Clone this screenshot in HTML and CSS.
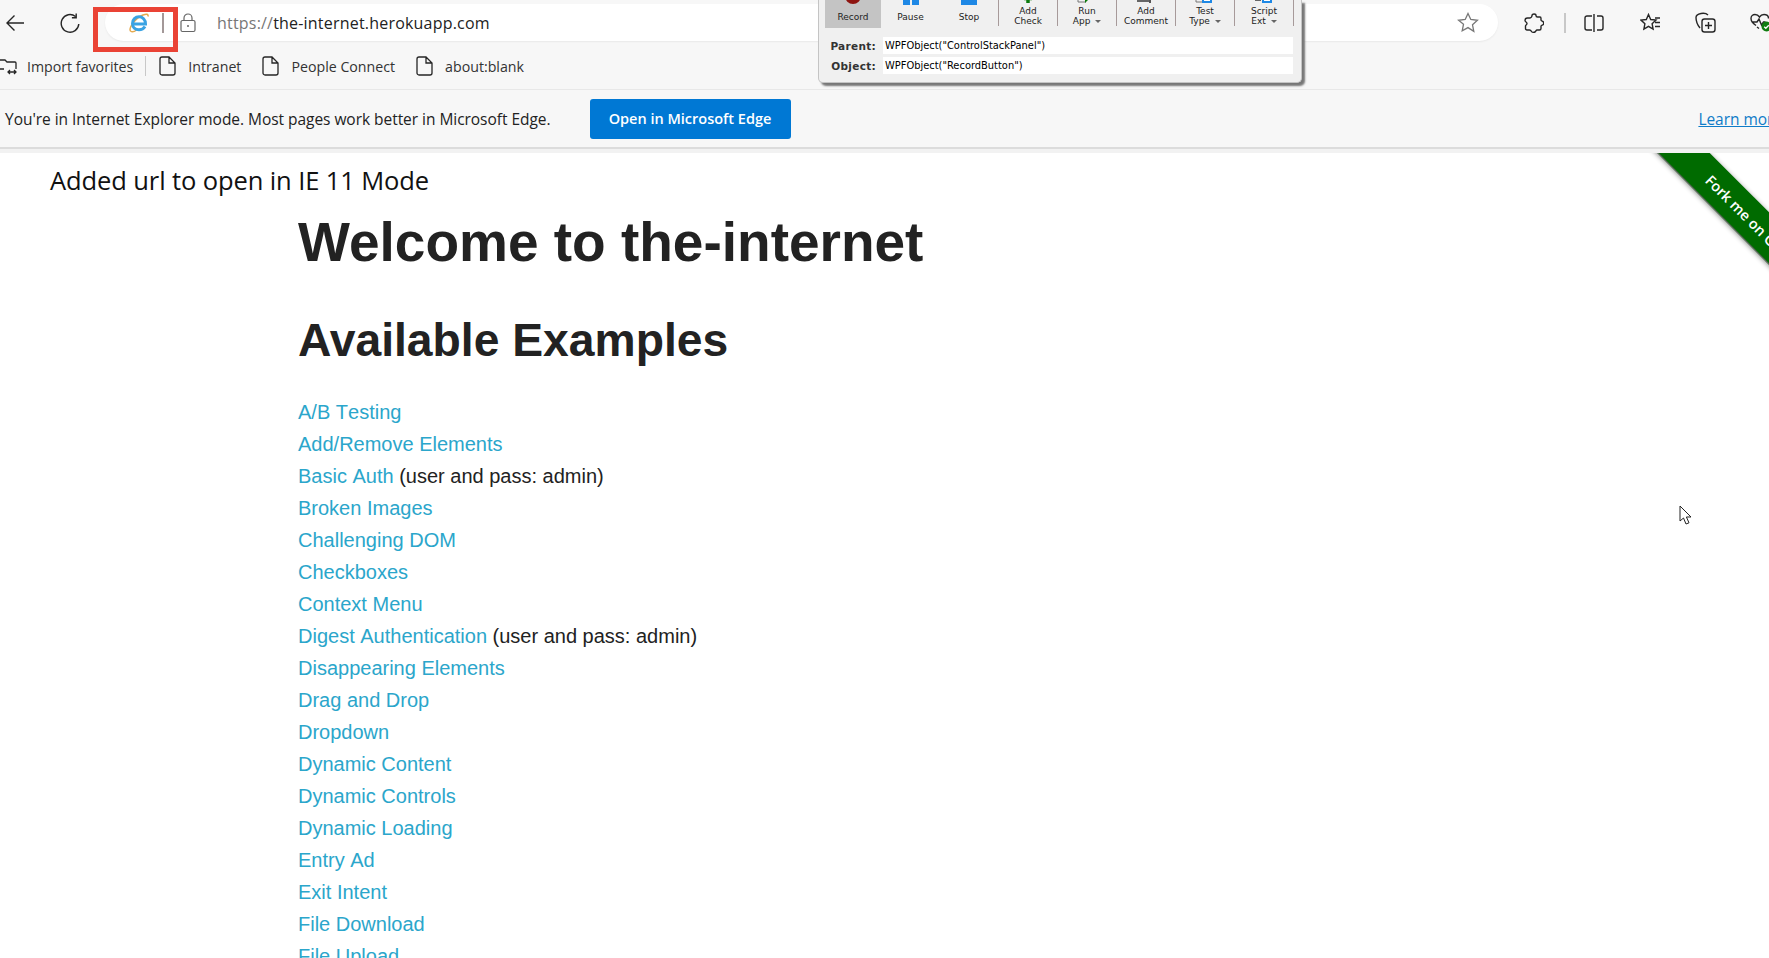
FILE: index.html
```html
<!DOCTYPE html>
<html lang="en">
<head>
<meta charset="utf-8">
<title>the-internet in IE mode</title>
<link rel="stylesheet" href="styles.css">
</head>
<body>
<div class="browser">
  <header class="toolbar">
    <svg class="nav back" width="20" height="18" viewBox="0 0 20 18"><path d="M19 9H2M9.500 1.500 2 9l7.500 7.500"/></svg>
    <svg class="nav reload" width="20" height="20" viewBox="0 0 20 20"><path d="M18.800 11A8.800 8.800 0 1 1 15.500 3.500M16.200 .5v4.300h-4.300"/></svg>
    <div class="address">
      <svg class="ie" width="20" height="20" viewBox="0 0 20 20">
        <path class="ie-ring" d="M1.500 18C-.5 15.500 6 5 14 2c3-1 5.500-1.200 5 1.500M1.500 18c1.500 1.200 4 .5 6-1"/>
        <path class="ie-e" d="M3.500 11h13C16.500 6.500 13.500 3.800 10 3.800S3.500 6.500 3.500 10.500 6.300 16.800 10 16.800c2.800 0 4.800-1.300 6-3.300"/>
      </svg>
      <span class="addr-sep"></span>
      <svg class="lock" width="16" height="20" viewBox="0 0 16 20"><path d="M4 8V5a4 4 0 0 1 8 0v3M2.500 7.500h11a1.500 1.500 0 0 1 1.500 1.500v8a1.500 1.500 0 0 1-1.500 1.500h-11A1.500 1.500 0 0 1 1 17V9a1.500 1.500 0 0 1 1.500-1.500z"/><circle cx="8" cy="13" r="1"/></svg>
      <span class="url"><span class="scheme">https://</span>the-internet.herokuapp.com</span>
      <svg class="star" width="22" height="21" viewBox="0 0 22 21"><path d="M11 1.500l2.800 6 6.600.8-4.900 4.500 1.300 6.500L11 15.600l-5.800 3.200 1.300-6.500L1.600 8.300l6.600-.8z"/></svg>
    </div>
    <svg class="tool puzzle" width="20" height="20" viewBox="0 0 20 20"><path d="M8 2.500c0-2 4-2 4 0 0 1 .5 1.500 1.500 1.500H16c1 0 1 .5 1 1.500V7c0 1 1.500 1 2 1.500 .800 1 .800 2.500 0 3.200-.5.500-2 .500-2 1.500v2.300c0 1-.5 1.500-1.500 1.500h-2.500c-1 0-1 1.500-2 2-1 .5-3 .5-3.500-.5-.5-1-1-1.500-2-1.500H3c-1 0-1.500-.5-1.500-1.500V13c0-1 1.500-1 1.500-2.500S1 9 1 7.500 2 5 3.500 5H6c1 0 2-1.500 2-2.500z"/></svg>
    <span class="tool-sep"></span>
    <svg class="tool split" width="20" height="20" viewBox="0 0 20 20"><path d="M8 3H3a2 2 0 0 0-2 2v10a2 2 0 0 0 2 2h5M13 3h4a2 2 0 0 1 2 2v10a2 2 0 0 1-2 2h-4M10 1v18"/></svg>
    <svg class="tool favs" width="21" height="20" viewBox="0 0 21 20"><path d="M8.500 1.500l2.200 5 5.300.6-3.900 3.600 1 5.300-4.600-2.700-4.600 2.700 1-5.300L1 7.100l5.300-.6zM15 5h5M15 9.500h5M15 13.500h5"/></svg>
    <svg class="tool colls" width="21" height="21" viewBox="0 0 21 21"><path d="M5 16C2.500 13 1 9 1 5.500 1 3 3 2 6 1.500c3-.5 5-.5 7 1.500"/><rect x="7" y="7" width="13" height="13" rx="2.500"/><path d="M13.500 10v7M10 13.500h7"/></svg>
    <span class="tool health">
      <svg width="24" height="20" viewBox="0 0 24 20"><path d="M6 12.500C3 10.500 1 8 1 5.500 1 3 3 1.500 5 1.500c2 0 3.500 1 4.500 2.500 1-1.500 2.500-2.500 4.500-2.500 2.500 0 4.500 1.500 4.500 4M2 9h5l2 -3 2.500 6 2-3h2M9 15.500l-2-1.500"/><circle class="ok" cx="16.500" cy="13.500" r="5"/><path class="tick" d="M14.200 13.700l1.600 1.600 3-3"/></svg>
    </span>
  </header>

  <nav class="favbar">
    <svg class="import" width="17" height="18" viewBox="0 0 17 18"><path d="M0 3h5l2 2h8a1 1 0 0 1 1 1v6M4 12H0M8 15h8M10 13l-2 2 2 2M14 13l2 2-2 2"/></svg>
    <span class="fav-label">Import favorites</span>
    <span class="fav-sep"></span>
    <a class="fav"><svg width="17" height="20" viewBox="0 0 17 20"><path d="M3 1h7l6 6v10a2 2 0 0 1-2 2H3a2 2 0 0 1-2-2V3a2 2 0 0 1 2-2zM10 1v6h6"/></svg>Intranet</a>
    <a class="fav"><svg width="17" height="20" viewBox="0 0 17 20"><path d="M3 1h7l6 6v10a2 2 0 0 1-2 2H3a2 2 0 0 1-2-2V3a2 2 0 0 1 2-2zM10 1v6h6"/></svg>People Connect</a>
    <a class="fav"><svg width="17" height="20" viewBox="0 0 17 20"><path d="M3 1h7l6 6v10a2 2 0 0 1-2 2H3a2 2 0 0 1-2-2V3a2 2 0 0 1 2-2zM10 1v6h6"/></svg>about:blank</a>
  </nav>

  <section class="infobar">
    <span class="info-text">You're in Internet Explorer mode. Most pages work better in Microsoft Edge.</span>
    <button class="open-edge">Open in Microsoft Edge</button>
    <a class="learn">Learn more</a>
  </section>

  <main class="page">
    <p class="note">Added url to open in IE 11 Mode</p>
    <div class="content">
      <h1>Welcome to the-internet</h1>
      <h2>Available Examples</h2>
      <ul class="examples">
        <li><a>A/B Testing</a></li>
        <li><a>Add/Remove Elements</a></li>
        <li><a>Basic Auth</a> (user and pass: admin)</li>
        <li><a>Broken Images</a></li>
        <li><a>Challenging DOM</a></li>
        <li><a>Checkboxes</a></li>
        <li><a>Context Menu</a></li>
        <li><a>Digest Authentication</a> (user and pass: admin)</li>
        <li><a>Disappearing Elements</a></li>
        <li><a>Drag and Drop</a></li>
        <li><a>Dropdown</a></li>
        <li><a>Dynamic Content</a></li>
        <li><a>Dynamic Controls</a></li>
        <li><a>Dynamic Loading</a></li>
        <li><a>Entry Ad</a></li>
        <li><a>Exit Intent</a></li>
        <li><a>File Download</a></li>
        <li><a>File Upload</a></li>
      </ul>
    </div>
    <div class="ribbon">Fork me on GitHub</div>
    <svg class="cursor" width="13" height="21" viewBox="0 0 13 21"><path d="M1 1v15l3.500-3 2.500 6 3-1.200-2.600-5.800H12z"/></svg>
  </main>
</div>

<div class="highlight"></div>

<aside class="recorder">
  <div class="rec-buttons">
    <div class="rec-btn active"><svg width="18" height="16" viewBox="0 0 18 16"><circle cx="9" cy="7" r="8" fill="#8e1410"/></svg><span>Record</span></div>
    <div class="rec-btn"><svg width="18" height="16" viewBox="0 0 18 16"><rect x="1" width="7" height="16" fill="#1e88e5"/><rect x="10" width="7" height="16" fill="#1e88e5"/></svg><span>Pause</span></div>
    <div class="rec-btn"><svg width="18" height="16" viewBox="0 0 18 16"><rect x="1" width="16" height="16" fill="#1e88e5"/></svg><span>Stop</span></div>
    <div class="rec-btn two sep"><svg width="18" height="10" viewBox="0 0 18 10"><path d="M9 0v7M5 2.500h8" stroke="#0c7a0c" stroke-width="3.500" fill="none"/></svg><span>Add<br>Check</span></div>
    <div class="rec-btn two sep"><svg width="22" height="10" viewBox="0 0 22 10"><path d="M2 0v6h8" stroke="#777" fill="none"/><path d="M9 0v7l7-7z" fill="#0c7a0c"/></svg><span>Run<br>App <i class="caret"></i></span></div>
    <div class="rec-btn two sep"><svg width="22" height="10" viewBox="0 0 22 10"><path d="M2 1h9M2 5h12" stroke="#666" stroke-width="2" fill="none"/><path d="M15 0v7M12 3h7" stroke="#555" stroke-width="2" fill="none"/></svg><span>Add<br>Comment</span></div>
    <div class="rec-btn two sep"><svg width="22" height="10" viewBox="0 0 22 10"><path d="M2 0v6h6" stroke="#777" fill="none"/><rect x="8" width="10" height="7" fill="#1e88e5"/><path d="M10 2h6M10 4.500h6" stroke="#fff" fill="none"/></svg><span>Test<br>Type <i class="caret"></i></span></div>
    <div class="rec-btn two sep"><svg width="22" height="10" viewBox="0 0 22 10"><rect x="2" width="6" height="5" fill="#666"/><rect x="9" width="10" height="7" fill="#1e88e5"/><path d="M11 2h6M11 4.500h6" stroke="#fff" fill="none"/></svg><span>Script<br>Ext <i class="caret"></i></span></div>
  </div>
  <div class="rec-field"><label>Parent:</label><output>WPFObject("ControlStackPanel")</output></div>
  <div class="rec-field"><label>Object:</label><output>WPFObject("RecordButton")</output></div>
</aside>
</body>
</html>
```
FILE: styles.css
```css
* { box-sizing: border-box; }
html, body { margin: 0; height: 958px; overflow: hidden; background: #fff; }
body { position: relative; font-family: "Open Sans", "Noto Sans", sans-serif; color: #222; }
.browser { display: flex; flex-direction: column; height: 958px; }

.toolbar { display: flex; align-items: center; height: 45px; background: #f7f7f7; flex: none; overflow: hidden; }
.toolbar svg { flex: none; }
.toolbar svg path, .toolbar svg rect { fill: none; stroke: #262626; stroke-width: 1.4; }
.nav.back { margin-left: 5px; }
.nav.reload { margin-left: 35px; }
.address { display: flex; align-items: center; width: 1393px; height: 37px; margin-left: 25px; background: #fff; border-radius: 19px; box-shadow: 0 1px 2px rgba(0,0,0,.06); flex: none; }
.toolbar .ie { margin-left: 24px; }
.toolbar .ie-ring { stroke: #e5a94e; stroke-width: 1.5; }
.toolbar .ie-e { stroke: #3aa3e3; stroke-width: 3; }
.addr-sep { width: 2px; height: 20px; background: #a39898; margin-left: 13px; flex: none; }
.toolbar .lock { margin-left: 16px; }
.toolbar .lock path { stroke: #666; stroke-width: 1.2; }
.lock circle { fill: #666; }
.url { margin-left: 21px; font-size: 16px; letter-spacing: .2px; color: #222; white-space: nowrap; }
.scheme { color: #777; }
.toolbar .star { margin-left: auto; margin-right: 19px; }
.toolbar .star path { stroke: #777; stroke-width: 1.3; }
.tool { flex: none; }
.puzzle { margin-left: 26px; }
.tool-sep { width: 2px; height: 20px; background: #c8c8c8; margin-left: 20px; flex: none; }
.split { margin-left: 18px; }
.favs { margin-left: 36px; }
.colls { margin-left: 34px; }
.health { margin-left: 34px; display: block; height: 20px; }
.toolbar .health .ok { fill: #107c10; }
.toolbar .health .tick { stroke: #fff; stroke-width: 1.3; }

.favbar { display: flex; align-items: center; height: 45px; background: #f7f7f7; border-bottom: 1px solid #e8e8e8; padding-bottom: 2px; font-size: 14.200px; color: #333; flex: none; }
.favbar svg { fill: none; stroke: #262626; stroke-width: 1.3; flex: none; }
.fav-label { margin-left: 10px; white-space: nowrap; }
.fav-sep { width: 1px; height: 20px; background: #c8c8c8; margin: 0 13px 0 12px; flex: none; }
.fav { display: flex; align-items: center; gap: 12px; margin-right: 21px; white-space: nowrap; }

.infobar { display: flex; align-items: center; height: 59px; padding: 0 0 0 5px; background: #f7f7f7; border-bottom: 2px solid #dcdcdc; box-shadow: 0 4px 0 #f2f2f2; position: relative; flex: none; font-size: 15.500px; letter-spacing: -.04px; }
.info-text { white-space: nowrap; flex: none; }
.open-edge { width: 201px; height: 40px; margin-left: 39px; background: #0078d4; color: #fff; border: 0; border-radius: 3px; font: 600 14.500px "Open Sans", sans-serif; flex: none; }
.learn { margin-left: auto; margin-right: -13px; color: #0f7cc8; text-decoration: underline; white-space: nowrap; flex: none; }

.page { position: relative; flex: 1; overflow: hidden; margin-top: 4px; background: #fff; }
.note { margin: 0; padding: 9px 0 0 50px; height: 46px; font-size: 25.500px; line-height: 36px; letter-spacing: -.1px; color: #111; white-space: nowrap; }
.content { margin-left: 298px; font-family: "Liberation Sans", Arial, sans-serif; }
h1 { margin: 5px 0 0; font-size: 55px; line-height: 76px; font-weight: 700; }
h2 { margin: 28px 0 0; font-size: 46.250px; line-height: 64px; font-weight: 700; }
.examples { list-style: none; margin: 24px 0 0; padding: 0; font-size: 20px; line-height: 32px; font-kerning: none; }
.examples a { color: #2ba6cb; }

.ribbon { position: absolute; left: 1609px; top: 57px; width: 300px; height: 37px; padding-left: 78px; transform: rotate(45deg); background: #006b00; border-bottom: 1px solid #666; box-shadow: 0 1px 5px rgba(0,0,0,.45); color: #fff; font-size: 14.500px; font-weight: 600; line-height: 37px; white-space: nowrap; }
.cursor { position: absolute; left: 1679px; top: 352px; fill: #fff; stroke: #222; stroke-width: 1; }

.highlight { position: absolute; left: 93px; top: 7px; width: 85px; height: 45px; border: 5px solid #ea4335; }

.recorder { position: absolute; left: 818px; top: 0; width: 484px; height: 83px; padding: 0 8px 0 7px; background: #f0f0f0; border: 1px solid #c4c4c4; border-top: 0; border-radius: 0 0 5px 5px; box-shadow: 3px 3px 2px #777; font-family: "DejaVu Sans", sans-serif; color: #222; }
.rec-buttons { display: flex; height: 28px; margin-left: -1px; }
.rec-btn { position: relative; display: flex; flex-direction: column; align-items: center; justify-content: flex-end; width: 59px; height: 28px; overflow: hidden; font-size: 9px; line-height: 10px; text-align: center; flex: none; }
.rec-btn svg { flex: none; margin-bottom: 7px; }
.rec-btn span { display: block; white-space: nowrap; padding-bottom: 6px; height: 16px; }
.rec-btn.two span { height: 20px; padding-bottom: 0; }
.rec-btn.two svg { margin-bottom: 0; }
.rec-btn.active { width: 56px; background: #c4c4c4; }
.rec-btn.sep { border-right: 1px solid #a79a9a; height: 26px; }
.rec-btn:nth-child(3) { width: 59px; border-right: 1px solid #a79a9a; height: 26px; }
.rec-btn:nth-child(3) span { padding-bottom: 4px; height: 14px; }
.rec-btn .caret { display: inline-block; width: 0; height: 0; margin-left: 2px; vertical-align: 1px; border: 3px solid transparent; border-top-color: #666; border-bottom: 0; }
.rec-field { display: flex; align-items: center; height: 17px; margin-bottom: 3px; }
.rec-buttons + .rec-field { margin-top: 9px; }
.rec-field label { width: 57px; padding-right: 7px; font-weight: 700; font-size: 10.500px; letter-spacing: .3px; text-align: right; color: #333; white-space: nowrap; flex: none; }
.rec-field output { flex: 1; height: 17px; padding-left: 2px; line-height: 17px; background: #fff; color: #000; font-size: 9.900px; white-space: nowrap; }
```
